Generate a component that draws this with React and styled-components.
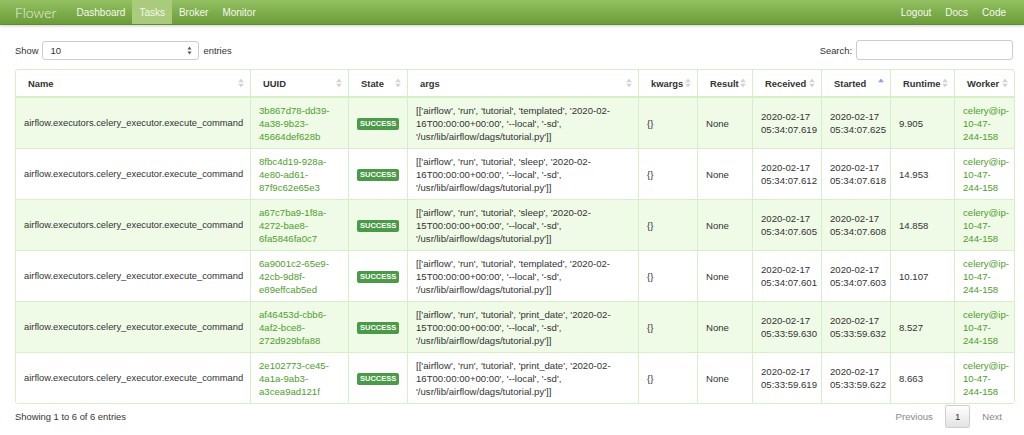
import React from 'react';
import styled, { createGlobalStyle } from 'styled-components';

const GlobalStyle = createGlobalStyle`
  body {
    margin: 0;
    background: #fff;
    font-family: "Liberation Sans", Arial, sans-serif;
    color: #333;
  }
`;

const Navbar = styled.nav`
  display: flex;
  align-items: stretch;
  height: 24px;
  padding: 0 11px 0 15px;
  background: linear-gradient(to bottom, #93c062 0%, #7aab48 60%, #6c9c3a 100%);
  border-bottom: 1px solid #5f8d30;
  box-shadow: 0 1px 3px rgba(0, 0, 0, 0.2);
`;

const Brand = styled.span`
  display: flex;
  align-items: center;
  font-family: Lato, "Open Sans", "Liberation Sans", sans-serif;
  font-size: 14px;
  font-weight: 300;
  color: #e9f2e0;
  margin-right: 13px;
`;

const NavLinks = styled.div`
  display: flex;
  align-items: stretch;
  margin-left: ${(p) => (p.right ? 'auto' : '0')};
`;

const NavLink = styled.a`
  display: flex;
  align-items: center;
  padding: 0 7px;
  font-size: 10px;
  color: #f4f9ee;
  text-decoration: none;
  background: ${(p) => (p.active ? '#a9cb7b' : 'transparent')};
`;

const Page = styled.main`
  padding: 14px 11px 0 15px;
`;

const Controls = styled.div`
  display: flex;
  align-items: center;
  justify-content: space-between;
  height: 22px;
  font-size: 9.4px;
`;

const Label = styled.label`
  display: flex;
  align-items: center;
  gap: 4px;
`;

const SelectBox = styled.div`
  display: flex;
  align-items: center;
  justify-content: space-between;
  width: 157px;
  height: 19px;
  box-sizing: border-box;
  padding: 0 6px 0 7px;
  border: 1px solid #ccc;
  border-radius: 3px;
  background: #fff;
  font-size: 9.6px;
`;

const SearchInput = styled.div`
  width: 157px;
  height: 20px;
  box-sizing: border-box;
  border: 1px solid #ccc;
  border-radius: 3px;
  background: #fff;
`;

const Table = styled.table`
  margin-top: 8px;
  width: 998px;
  table-layout: fixed;
  border-collapse: separate;
  border-spacing: 0;
  border: 1px solid #d6efc6;
  border-radius: 3px;
  font-size: 9.6px;
`;

const Th = styled.th`
  position: relative;
  height: 26px;
  padding: 0 16px 0 12px;
  text-align: left;
  font-weight: bold;
  font-size: 9.4px;
  color: #333;
  border-left: ${(p) => (p.first ? 'none' : '1px solid #d6efc6')};
  border-bottom: 2px solid #d6efc6;
`;

const Td = styled.td`
  height: 50px;
  padding: 0 8px;
  line-height: 13px;
  vertical-align: middle;
  background: ${(p) => (p.odd ? '#effae7' : '#fff')};
  border-left: ${(p) => (p.first ? 'none' : '1px solid #d6efc6')};
  border-top: ${(p) => (p.top ? 'none' : '1px solid #d6efc6')};
  color: ${(p) => (p.link ? '#4d9e2b' : '#333')};
  font-size: ${(p) => (p.narrow ? '9.35px' : 'inherit')};
`;

const Badge = styled.span`
  display: inline-block;
  padding: 1px 3px;
  border-radius: 2px;
  background: #4b9a47;
  color: #fff;
  font-size: 7.5px;
  font-weight: bold;
  line-height: 10px;
`;

const Sort = styled.span`
  position: absolute;
  right: 6px;
  top: 50%;
  transform: translateY(-50%);
  display: flex;
  flex-direction: column;
  gap: 1px;
`;

const Footer = styled.div`
  display: flex;
  align-items: center;
  justify-content: space-between;
  height: 24px;
  font-size: 9.4px;
`;

const Pager = styled.div`
  display: flex;
  align-items: center;
`;

const PageLink = styled.span`
  display: flex;
  align-items: center;
  justify-content: center;
  height: 23px;
  padding: 0 ${(p) => (p.current ? '9px' : '11px')};
  margin-right: ${(p) => (p.last ? '-1px' : '0')};
  color: ${(p) => (p.current ? '#333' : '#888')};
  font-size: 9.6px;
  box-sizing: border-box;
  border: ${(p) => (p.current ? '1px solid #cfcfcf' : '1px solid transparent')};
  border-radius: 2px;
  background: ${(p) => (p.current ? 'linear-gradient(to bottom, #fff 0%, #e2e2e2 100%)' : 'transparent')};
`;

function SortIcon({ dir }) {
  const up = dir === 'asc' ? '#8e9ee6' : '#d3d3d3';
  const down = dir === 'asc' ? 'transparent' : '#d3d3d3';
  return (
    <Sort>
      <svg width="6" height="4" viewBox="0 0 6 4">
        <path d="M3 0 L6 4 L0 4 Z" fill={up} />
      </svg>
      <svg width="6" height="4" viewBox="0 0 6 4">
        <path d="M0 0 L6 0 L3 4 Z" fill={down} />
      </svg>
    </Sort>
  );
}

const columns = [
  { title: 'Name', width: 234 },
  { title: 'UUID', width: 98 },
  { title: 'State', width: 59 },
  { title: 'args', width: 231 },
  { title: 'kwargs', width: 59 },
  { title: 'Result', width: 55 },
  { title: 'Received', width: 69 },
  { title: 'Started', width: 69, sort: 'asc' },
  { title: 'Runtime', width: 64 },
  { title: 'Worker', width: 60 },
];

const tasks = [
  {
    uuid: '3b867d78-dd39-4a38-9b23-45664def628b',
    args: "[['airflow', 'run', 'tutorial', 'templated', '2020-02-16T00:00:00+00:00', '--local', '-sd', '/usr/lib/airflow/dags/tutorial.py']]",
    received: ['2020-02-17', '05:34:07.619'],
    started: ['2020-02-17', '05:34:07.625'],
    runtime: '9.905',
  },
  {
    uuid: '8fbc4d19-928a-4e80-ad61-87f9c62e65e3',
    args: "[['airflow', 'run', 'tutorial', 'sleep', '2020-02-16T00:00:00+00:00', '--local', '-sd', '/usr/lib/airflow/dags/tutorial.py']]",
    received: ['2020-02-17', '05:34:07.612'],
    started: ['2020-02-17', '05:34:07.618'],
    runtime: '14.953',
  },
  {
    uuid: 'a67c7ba9-1f8a-4272-bae8-6fa5846fa0c7',
    args: "[['airflow', 'run', 'tutorial', 'sleep', '2020-02-15T00:00:00+00:00', '--local', '-sd', '/usr/lib/airflow/dags/tutorial.py']]",
    received: ['2020-02-17', '05:34:07.605'],
    started: ['2020-02-17', '05:34:07.608'],
    runtime: '14.858',
  },
  {
    uuid: '6a9001c2-65e9-42cb-9d8f-e89effcab5ed',
    args: "[['airflow', 'run', 'tutorial', 'templated', '2020-02-15T00:00:00+00:00', '--local', '-sd', '/usr/lib/airflow/dags/tutorial.py']]",
    received: ['2020-02-17', '05:34:07.601'],
    started: ['2020-02-17', '05:34:07.603'],
    runtime: '10.107',
  },
  {
    uuid: 'af46453d-cbb6-4af2-bce8-272d929bfa88',
    args: "[['airflow', 'run', 'tutorial', 'print_date', '2020-02-15T00:00:00+00:00', '--local', '-sd', '/usr/lib/airflow/dags/tutorial.py']]",
    received: ['2020-02-17', '05:33:59.630'],
    started: ['2020-02-17', '05:33:59.632'],
    runtime: '8.527',
  },
  {
    uuid: '2e102773-ce45-4a1a-9ab3-a3cea9ad121f',
    args: "[['airflow', 'run', 'tutorial', 'print_date', '2020-02-16T00:00:00+00:00', '--local', '-sd', '/usr/lib/airflow/dags/tutorial.py']]",
    received: ['2020-02-17', '05:33:59.619'],
    started: ['2020-02-17', '05:33:59.622'],
    runtime: '8.663',
  },
];

// splits uuid into the three wrapped lines seen in the table
function uuidLines(uuid) {
  const parts = uuid.split('-');
  return [parts[0] + '-' + parts[1] + '-', parts[2] + '-' + parts[3] + '-', parts[4]];
}

function Lines({ items }) {
  return items.map((l, i) => (
    <React.Fragment key={i}>
      {l}
      {i < items.length - 1 && <br />}
    </React.Fragment>
  ));
}

export default function App() {
  return (
    <>
      <GlobalStyle />
      <Navbar>
        <Brand>Flower</Brand>
        <NavLinks>
          <NavLink>Dashboard</NavLink>
          <NavLink active>Tasks</NavLink>
          <NavLink>Broker</NavLink>
          <NavLink>Monitor</NavLink>
        </NavLinks>
        <NavLinks right>
          <NavLink>Logout</NavLink>
          <NavLink>Docs</NavLink>
          <NavLink>Code</NavLink>
        </NavLinks>
      </Navbar>
      <Page>
        <Controls>
          <Label>
            Show
            <SelectBox>
              <span>10</span>
              <svg width="5" height="9" viewBox="0 0 5 9">
                <path d="M2.5 0.5 L4.5 3.5 L0.5 3.5 Z M0.5 5.5 L4.5 5.5 L2.5 8.5 Z" fill="#555" />
              </svg>
            </SelectBox>
            entries
          </Label>
          <Label>
            Search:
            <SearchInput />
          </Label>
        </Controls>
        <Table>
          <colgroup>
            {columns.map((c) => (
              <col key={c.title} style={{ width: c.width }} />
            ))}
          </colgroup>
          <thead>
            <tr>
              {columns.map((c, i) => (
                <Th key={c.title} first={i === 0}>
                  {c.title}
                  <SortIcon dir={c.sort} />
                </Th>
              ))}
            </tr>
          </thead>
          <tbody>
            {tasks.map((t, i) => {
              const odd = i % 2 === 0;
              const top = i === 0;
              return (
                <tr key={t.uuid}>
                  <Td odd={odd} top={top} first narrow>
                    airflow.executors.celery_executor.execute_command
                  </Td>
                  <Td odd={odd} top={top} link>
                    <Lines items={uuidLines(t.uuid)} />
                  </Td>
                  <Td odd={odd} top={top}>
                    <Badge>SUCCESS</Badge>
                  </Td>
                  <Td odd={odd} top={top}>
                    {t.args}
                  </Td>
                  <Td odd={odd} top={top}>{'{}'}</Td>
                  <Td odd={odd} top={top}>None</Td>
                  <Td odd={odd} top={top}>
                    <Lines items={t.received} />
                  </Td>
                  <Td odd={odd} top={top}>
                    <Lines items={t.started} />
                  </Td>
                  <Td odd={odd} top={top}>{t.runtime}</Td>
                  <Td odd={odd} top={top} link>
                    <Lines items={['celery@ip-', '10-47-', '244-158']} />
                  </Td>
                </tr>
              );
            })}
          </tbody>
        </Table>
        <Footer>
          <span>Showing 1 to 6 of 6 entries</span>
          <Pager>
            <PageLink>Previous</PageLink>
            <PageLink current>1</PageLink>
            <PageLink last>Next</PageLink>
          </Pager>
        </Footer>
      </Page>
    </>
  );
}
